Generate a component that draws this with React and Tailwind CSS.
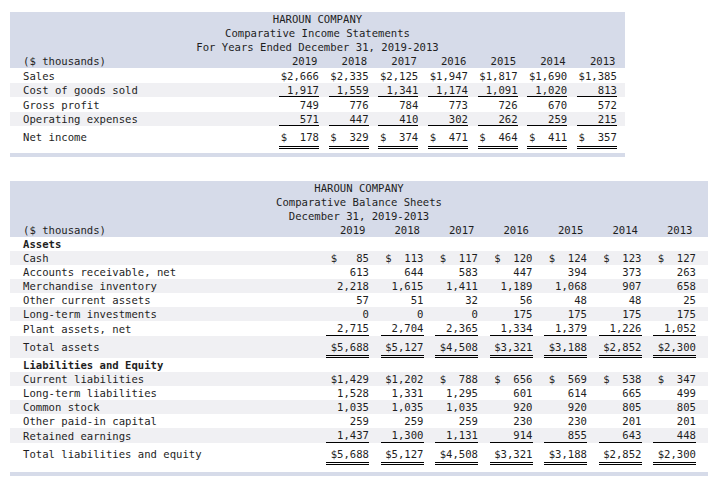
const years = ['2019', '2018', '2017', '2016', '2015', '2014', '2013'];

const income = [
  { label: 'Sales', h: 'h-[15px]', vals: ['$2,666', '$2,335', '$2,125', '$1,947', '$1,817', '$1,690', '$1,385'] },
  { label: 'Cost of goods sold', h: 'h-[14px]', shade: true, line: 'single', vals: ['1,917', '1,559', '1,341', '1,174', '1,091', '1,020', '813'] },
  { label: 'Gross profit', h: 'h-[15px]', vals: ['749', '776', '784', '773', '726', '670', '572'] },
  { label: 'Operating expenses', h: 'h-[14px]', shade: true, line: 'single', vals: ['571', '447', '410', '302', '262', '259', '215'] },
  { label: 'Net income', total: true, vals: ['$  178', '$  329', '$  374', '$  471', '$  464', '$  411', '$  357'] },
];

const balance = [
  { label: 'Assets', bold: true, h: 'h-[14px]', vals: [] },
  { label: 'Cash', h: 'h-[14px]', shade: true, vals: ['$   85', '$  113', '$  117', '$  120', '$  124', '$  123', '$  127'] },
  { label: 'Accounts receivable, net', h: 'h-[14px]', vals: ['613', '644', '583', '447', '394', '373', '263'] },
  { label: 'Merchandise inventory', h: 'h-[14px]', shade: true, vals: ['2,218', '1,615', '1,411', '1,189', '1,068', '907', '658'] },
  { label: 'Other current assets', h: 'h-[14px]', vals: ['57', '51', '32', '56', '48', '48', '25'] },
  { label: 'Long-term investments', h: 'h-[14px]', shade: true, vals: ['0', '0', '0', '175', '175', '175', '175'] },
  { label: 'Plant assets, net', h: 'h-[15px]', line: 'single', vals: ['2,715', '2,704', '2,365', '1,334', '1,379', '1,226', '1,052'] },
  { label: 'Total assets', total: true, shade: true, vals: ['$5,688', '$5,127', '$4,508', '$3,321', '$3,188', '$2,852', '$2,300'] },
  { label: 'Liabilities and Equity', bold: true, h: 'h-[14px]', vals: [] },
  { label: 'Current liabilities', h: 'h-[14px]', shade: true, vals: ['$1,429', '$1,202', '$  788', '$  656', '$  569', '$  538', '$  347'] },
  { label: 'Long-term liabilities', h: 'h-[14px]', vals: ['1,528', '1,331', '1,295', '601', '614', '665', '499'] },
  { label: 'Common stock', h: 'h-[14px]', shade: true, vals: ['1,035', '1,035', '1,035', '920', '920', '805', '805'] },
  { label: 'Other paid-in capital', h: 'h-[14px]', vals: ['259', '259', '259', '230', '230', '201', '201'] },
  { label: 'Retained earnings', h: 'h-[15px]', shade: true, line: 'single', vals: ['1,437', '1,300', '1,131', '914', '855', '643', '448'] },
  { label: 'Total liabilities and equity', total: true, vals: ['$5,688', '$5,127', '$4,508', '$3,321', '$3,188', '$2,852', '$2,300'] },
];

function Statement({ title, rows, wrap, labelW, colW, ulW, padR, yearPad, totalPb, gap }) {
  return (
    <div className={wrap}>
      {/* titre */}
      <div className="bg-[#d6dbe9] text-center leading-[14px]">
        {title.map((t) => (
          <div key={t} className="h-[14px]">{t}</div>
        ))}
        <div className={`flex h-[14px] text-left ${padR}`}>
          <div className={`${labelW} pl-[13px]`}>($ thousands)</div>
          {years.map((y) => (
            <div key={y} className={`${colW} text-right ${yearPad}`}>{y}</div>
          ))}
        </div>
      </div>

      {rows.map((r) =>
        r.total ? (
          <div
            key={r.label}
            className={`flex items-start pt-[4px] ${padR} ${r.shade ? 'bg-[#f0f0f3]' : 'bg-white'}`}
          >
            <div className={`${labelW} pl-[13px] leading-[14px]`}>{r.label}</div>
            {r.vals.map((v, i) => (
              <div key={i} className={`${colW} flex justify-end`}>
                <div className={`${ulW} text-right whitespace-pre leading-[14px] ${totalPb} border-b-[3px] border-double border-black`}>
                  {v}
                </div>
              </div>
            ))}
          </div>
        ) : (
          <div
            key={r.label}
            className={`flex ${r.h} ${padR} ${r.shade ? 'bg-[#f0f0f3]' : 'bg-white'}`}
          >
            <div className={`${labelW} pl-[13px] flex items-center ${r.bold ? 'font-bold' : ''}`}>
              {r.label}
            </div>
            {r.vals.map((v, i) => (
              <div key={i} className={`${colW} flex justify-end`}>
                <div
                  className={`${ulW} text-right whitespace-pre flex items-center justify-end ${
                    r.line === 'single' ? 'border-b border-black' : ''
                  }`}
                >
                  {v}
                </div>
              </div>
            ))}
          </div>
        )
      )}
      <div className={gap} />
      <div className="h-[4px] bg-[#d6dbe9]" />
    </div>
  );
}

export default function App() {
  return (
    <div className="w-[715px] h-[493px] bg-white text-[#1e1e1e] text-[10.6px] leading-[14px] font-['DejaVu_Sans_Mono','Liberation_Mono',monospace] overflow-hidden">
      <Statement
        wrap="ml-[10px] pt-[12px] w-[615px]"
        title={['HAROUN COMPANY', 'Comparative Income Statements', 'For Years Ended December 31, 2019-2013']}
        rows={income}
        labelW="w-[259.3px]"
        colW="w-[49.67px]"
        ulW="w-[40px]"
        padR="pr-[8px]"
        yearPad="pr-[1.5px]"
        totalPb="pb-[2px]"
        gap="h-[4px]"
      />
      <Statement
        wrap="ml-[10px] mt-[24px] w-[698px]"
        title={['HAROUN COMPANY', 'Comparative Balance Sheets', 'December 31, 2019-2013']}
        rows={balance}
        labelW="w-[304.5px]"
        colW="w-[54.5px]"
        ulW="w-[43px]"
        padR="pr-[12px]"
        yearPad="pr-[3.5px]"
        totalPb="pb-[1px]"
        gap="h-[7px]"
      />
    </div>
  );
}
